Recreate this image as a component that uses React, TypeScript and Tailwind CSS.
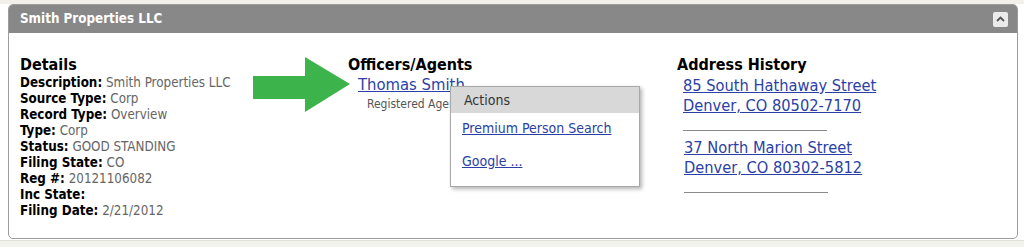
import React from 'react';

const font = { fontFamily: '"DejaVu Sans Condensed", "DejaVu Sans", Verdana, sans-serif' };

type Row = { label: string; value: string };

const details: Row[] = [
  { label: 'Description:', value: 'Smith Properties LLC' },
  { label: 'Source Type:', value: 'Corp' },
  { label: 'Record Type:', value: 'Overview' },
  { label: 'Type:', value: 'Corp' },
  { label: 'Status:', value: 'GOOD STANDING' },
  { label: 'Filing State:', value: 'CO' },
  { label: 'Reg #:', value: '20121106082' },
  { label: 'Inc State:', value: '' },
  { label: 'Filing Date:', value: '2/21/2012' },
];

const addresses = [
  ['85 South Hathaway Street', 'Denver, CO 80502-7170'],
  ['37 North Marion Street', 'Denver, CO 80302-5812'],
];

function GreenArrow() {
  return (
    <svg width="98" height="56" viewBox="0 0 98 56" className="absolute left-[-95px] top-[2px]">
      <polygon points="0,19 52,19 52,0 97,27 52,55 52,42 0,42" fill="#3cb44b" />
    </svg>
  );
}

export default function App() {
  return (
    <div className="flex h-[247px] w-[1024px] flex-col bg-white" style={font}>
      <div className="h-[4px] bg-[#f1f1ea]" />

      <div className="ml-[8px] w-[1010px] rounded-[5px] border border-[#9c9c9c] bg-white">
        {/* header */}
        <div className="flex h-[28px] items-center justify-between rounded-t-[4px] bg-[#888888] pl-[11px] pr-[9px]">
          <span className="text-[13.3px] font-bold text-white">Smith Properties LLC</span>
          <button className="flex h-[15px] w-[15px] items-center justify-center rounded-[2px] bg-[#ebebeb]">
            <svg width="9" height="6" viewBox="0 0 9 6">
              <path d="M1 5 L4.5 1.5 L8 5" stroke="#555" strokeWidth="1.8" fill="none" />
            </svg>
          </button>
        </div>

        {/* body */}
        <div className="grid h-[205px] grid-cols-[328px_329px_1fr] pl-[11px] pt-[22px]">
          <div>
            <h3 className="text-[16px] font-bold leading-[19px] text-black">Details</h3>
            <div className="pt-[1px] text-[13.3px] leading-[16px]">
              {details.map((r) => (
                <div key={r.label}>
                  <span className="font-bold text-black">{r.label}</span>{' '}
                  <span className="text-[#666666]">{r.value}</span>
                </div>
              ))}
            </div>
          </div>

          <div className="relative">
            <GreenArrow />
            <h3 className="text-[16px] font-bold leading-[19px] text-black">Officers/Agents</h3>
            <a href="#" className="ml-[10px] block text-[16.5px] leading-[21px] text-[#2b3fa6] underline">
              Thomas Smith
            </a>
            <div className="ml-[19px] pt-[1px] text-[12px] leading-[17px] text-[#555555]">Registered Agent</div>

            <div className="absolute left-[102px] top-[31px] w-[190px] border border-[#a8a8a8] bg-white shadow-[2px_2px_4px_rgba(0,0,0,0.3)]">
              <div className="h-[26px] bg-[#d8d8d8] pl-[13px] text-[14px] leading-[26px] text-[#333333]">Actions</div>
              <div className="flex flex-col gap-[15px] pl-[11px] pt-[6px] pb-[16px]">
                <a href="#" className="text-[14px] leading-[18px] text-[#2b3fa6] underline">Premium Person Search</a>
                <a href="#" className="text-[14px] leading-[18px] text-[#2b3fa6] underline">Google ...</a>
              </div>
            </div>
          </div>

          <div>
            <h3 className="text-[16px] font-bold leading-[19px] text-black">Address History</h3>
            {addresses.map((a, i) => (
              <div key={i} className={i === 0 ? 'pl-[6px] pt-[2px]' : 'pl-[7px] pt-[7px]'}>
                <a href="#" className="block text-[16.3px] leading-[20px] text-[#2b3fa6] underline">{a[0]}</a>
                <a href="#" className="block text-[16.3px] leading-[20px] text-[#2b3fa6] underline">{a[1]}</a>
                <div className="mt-[14px] h-px w-[144px] bg-[#8a8a8a]" />
              </div>
            ))}
          </div>
        </div>
      </div>

      <div className="mt-[1px] flex-1 border-t border-[#e2e2da] bg-[#f2f2ec]" />
    </div>
  );
}
